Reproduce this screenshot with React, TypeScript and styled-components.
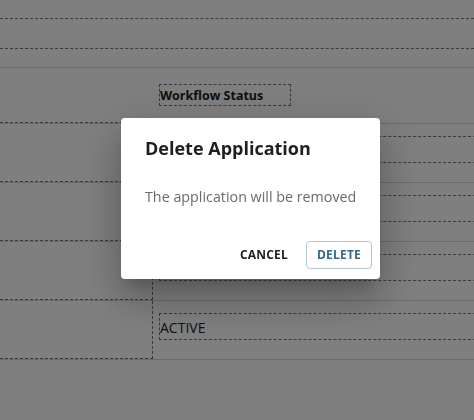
import React from 'react'
import { styled, createGlobalStyle } from 'styled-components';

type Row = {
    id: string;
    value: string;
}

const rows: Row[] = [
    { id: 'r1', value: '' },
    { id: 'r2', value: '' },
    { id: 'r3', value: '' },
    { id: 'r4', value: 'ACTIVE' },
]

const App = () => {
    return (
        <>
            <GlobalStyle />
            <Page>
                <Toolbar>
                    <ToolbarBox />
                </Toolbar>
                <HeaderRow>
                    <HeaderLabel />
                    <ValueCell>
                        <HeaderBox>Workflow Status</HeaderBox>
                    </ValueCell>
                </HeaderRow>
                {
                    rows.map(
                        row => <BodyRow key={row.id}>
                            <LabelCell />
                            <ValueCell>
                                <ValueBox>{row.value}</ValueBox>
                            </ValueCell>
                        </BodyRow>
                    )
                }
            </Page>
            <Backdrop>
                <Dialog role="dialog">
                    <Title>Delete Application</Title>
                    <Message>The application will be removed</Message>
                    <Actions>
                        <TextButton>Cancel</TextButton>
                        <OutlineButton>Delete</OutlineButton>
                    </Actions>
                </Dialog>
            </Backdrop>
        </>
    )
};

const GlobalStyle = createGlobalStyle`
    html, body {
        margin: 0;
        padding: 0;
        background: #ffffff;
        font-family: "Open Sans", "Noto Sans", sans-serif;
    }
`

const Page = styled.main`
    width: 100%;
    min-height: 420px;
    overflow: hidden;
`

const Toolbar = styled.div`
    padding: 18px 0;
    border-bottom: 1px solid #d6d6d6;
`

const ToolbarBox = styled.div`
    height: 29px;
    border-top: 1px dashed #777;
    border-bottom: 1px dashed #777;
`

const HeaderRow = styled.div`
    display: grid;
    grid-template-columns: 153px 1fr;
    height: 55px;
    border-bottom: 1px solid #d6d6d6;
`

const BodyRow = styled.div`
    display: grid;
    grid-template-columns: 153px 1fr;
    height: 58px;
    border-bottom: 1px solid #d6d6d6;
`

const HeaderLabel = styled.div`
    border-bottom: 1px dashed #777;
`

const LabelCell = styled.div`
    border-right: 1px dashed #777;
    border-bottom: 1px dashed #777;
`

const ValueCell = styled.div`
    padding: 12px 0 0 6px;
    ${HeaderRow} & {
        padding-top: 16px;
    }
`

const HeaderBox = styled.div`
    width: 130px;
    height: 20px;
    border: 1px dashed #777;
    font-size: 12.5px;
    font-weight: 700;
    line-height: 22px;
    color: #1c1c1c;
`

const ValueBox = styled.div`
    height: 25px;
    margin-right: -2px;
    border: 1px dashed #777;
    font-size: 14px;
    line-height: 27px;
    color: #222;
`

const Backdrop = styled.div`
    position: fixed;
    inset: 0;
    background: rgba(0, 0, 0, 0.5);
    display: flex;
    align-items: flex-start;
    padding: 118px 0 0 121px;
`

const Dialog = styled.section`
    width: 259px;
    height: 161px;
    box-sizing: border-box;
    background: #fff;
    border-radius: 4px;
    display: flex;
    flex-direction: column;
    box-shadow: 0 11px 15px -7px rgba(0,0,0,0.2), 0 24px 38px 3px rgba(0,0,0,0.14), 0 9px 46px 8px rgba(0,0,0,0.12);
`

const Title = styled.h2`
    margin: 0;
    padding: 16px 24px 0;
    font-size: 18px;
    font-weight: 700;
    line-height: 28px;
    color: #1f1f1f;
`

const Message = styled.p`
    margin: 0;
    padding: 25px 24px 0;
    font-size: 14.3px;
    line-height: 20px;
    color: #6b6b6b;
    white-space: nowrap;
`

const Actions = styled.div`
    margin-top: auto;
    display: flex;
    justify-content: flex-end;
    align-items: center;
    gap: 10px;
    padding: 0 8px 10px;
`

const TextButton = styled.button`
    border: none;
    background: none;
    padding: 6px 8px;
    font-family: inherit;
    font-size: 12px;
    font-weight: 700;
    text-transform: uppercase;
    letter-spacing: 0.2px;
    color: #222;
`

const OutlineButton = styled.button`
    width: 66px;
    height: 28px;
    padding: 0;
    border: 1px solid #b5c7d3;
    border-radius: 4px;
    background: #fff;
    font-family: inherit;
    font-size: 12px;
    font-weight: 700;
    text-transform: uppercase;
    letter-spacing: 0.2px;
    color: #33698f;
`

export default App;
